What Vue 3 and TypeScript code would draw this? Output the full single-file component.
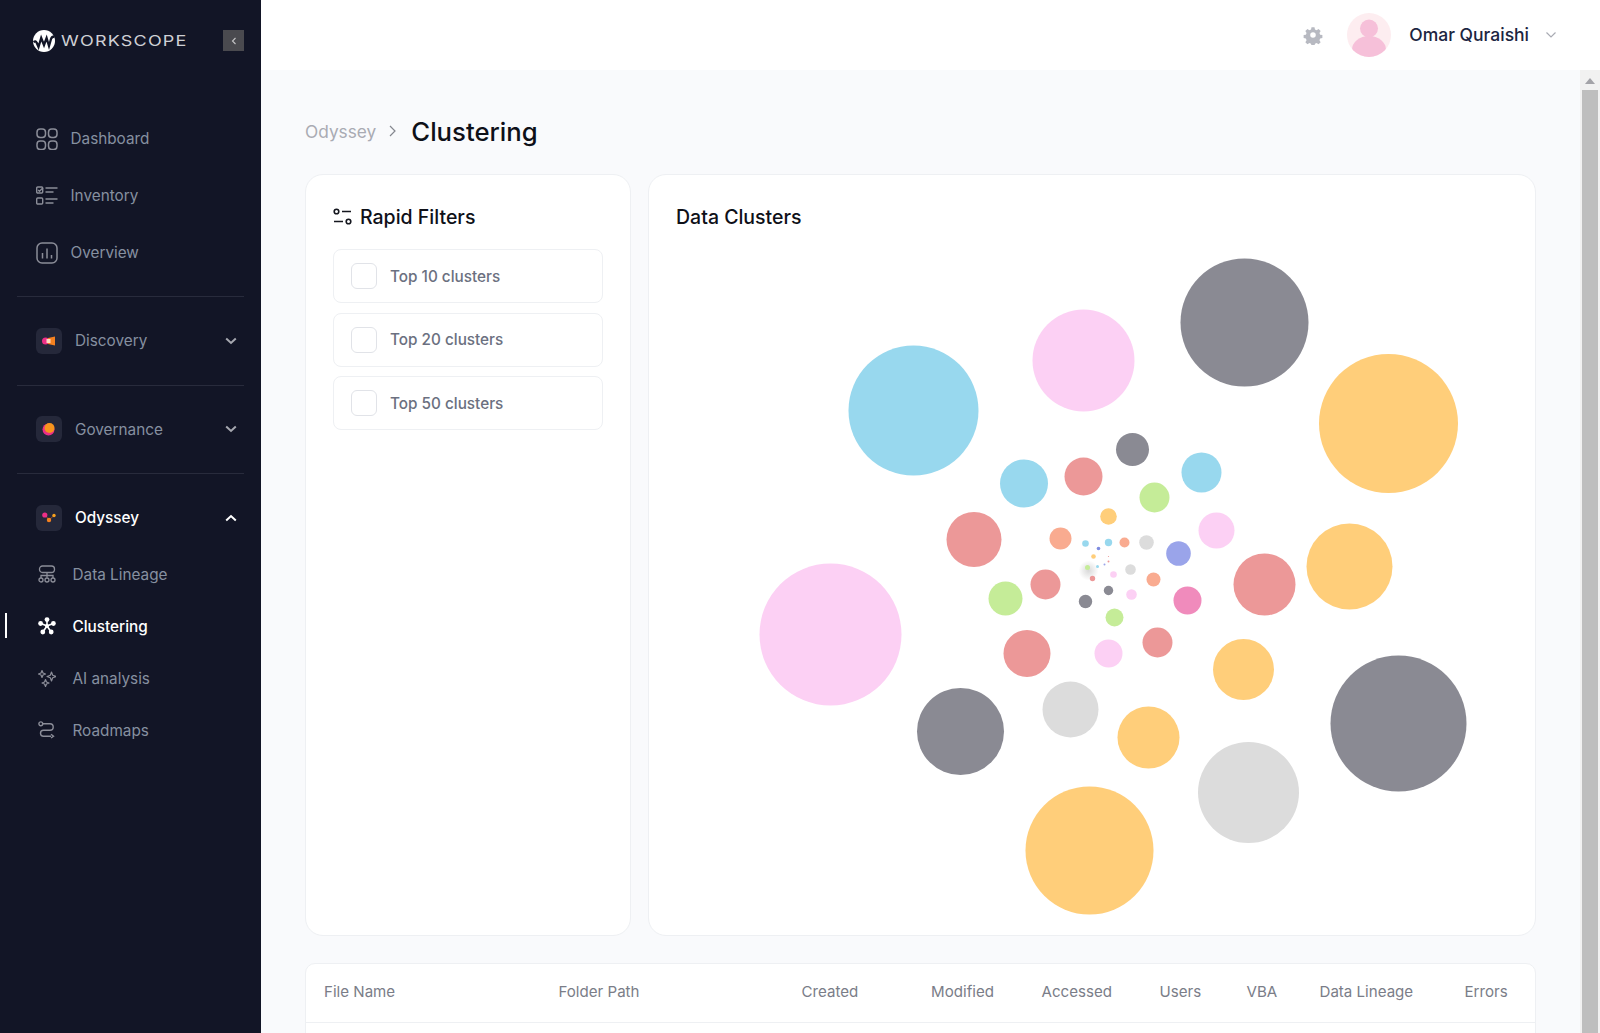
<script setup lang="ts">
type Bubble = { x: number; y: number; r: number; fill: string };

const gray = "#8a8a93";
const blue = "#98d8ee";
const pink = "#fcd0f4";
const orange = "#ffce7a";
const red = "#ec9898";
const green = "#c5ec98";
const salmon = "#f9ab90";
const peri = "#9aa4ea";
const light = "#dcdcdc";

const bubbles: Bubble[] = [
  { x: 1244, y: 322, r: 64, fill: gray },
  { x: 1083, y: 360, r: 51, fill: pink },
  { x: 913, y: 410, r: 65, fill: blue },
  { x: 1388, y: 423, r: 69.5, fill: orange },
  { x: 1132, y: 449, r: 16.5, fill: gray },
  { x: 1201, y: 472, r: 20, fill: blue },
  { x: 1083, y: 476, r: 19, fill: red },
  { x: 1023.5, y: 483, r: 24, fill: blue },
  { x: 1154, y: 497, r: 15, fill: green },
  { x: 1108, y: 516, r: 8.3, fill: orange },
  { x: 1216, y: 530, r: 18, fill: pink },
  { x: 973.5, y: 539, r: 27.5, fill: red },
  { x: 1060, y: 538, r: 11, fill: salmon },
  { x: 1349, y: 566, r: 43, fill: orange },
  { x: 1178, y: 553, r: 12.3, fill: peri },
  { x: 1264, y: 584, r: 31, fill: red },
  { x: 1045, y: 584, r: 15, fill: red },
  { x: 1005, y: 598, r: 17, fill: green },
  { x: 1187, y: 600, r: 14, fill: "#f08bbc" },
  { x: 830, y: 634, r: 71, fill: pink },
  { x: 1114, y: 617, r: 9, fill: green },
  { x: 1157, y: 642, r: 15, fill: red },
  { x: 1108, y: 653, r: 14, fill: pink },
  { x: 1026.5, y: 653, r: 23.5, fill: red },
  { x: 1243, y: 669, r: 30.5, fill: orange },
  { x: 1398, y: 723, r: 68, fill: gray },
  { x: 960, y: 731, r: 43.5, fill: gray },
  { x: 1070, y: 709, r: 28, fill: light },
  { x: 1148, y: 737, r: 31, fill: orange },
  { x: 1248, y: 792, r: 50.5, fill: light },
  { x: 1089, y: 850, r: 64, fill: orange },
  // centre of the spiral
  { x: 1085, y: 543, r: 3.3, fill: blue },
  { x: 1108, y: 542, r: 3.7, fill: blue },
  { x: 1124, y: 542, r: 5, fill: salmon },
  { x: 1146, y: 542, r: 7.3, fill: light },
  { x: 1098, y: 548, r: 1.8, fill: "#7f8ce0" },
  { x: 1093, y: 556, r: 2.3, fill: orange },
  { x: 1108, y: 556, r: 0.6, fill: red },
  { x: 1108, y: 561, r: 1, fill: red },
  { x: 1104, y: 564, r: 1, fill: peri },
  { x: 1097, y: 566, r: 1.5, fill: blue },
  { x: 1087, y: 567, r: 2.5, fill: green },
  { x: 1092, y: 578, r: 2.7, fill: red },
  { x: 1113, y: 574, r: 3.3, fill: pink },
  { x: 1130, y: 569, r: 5.3, fill: light },
  { x: 1153, y: 579, r: 7, fill: salmon },
  { x: 1131, y: 594, r: 5.3, fill: pink },
  { x: 1108, y: 590, r: 4.7, fill: gray },
  { x: 1085, y: 601, r: 6.7, fill: gray },
];

const filters = ["Top 10 clusters", "Top 20 clusters", "Top 50 clusters"];

const columns = [
  "File Name",
  "Folder Path",
  "Created",
  "Modified",
  "Accessed",
  "Users",
  "VBA",
  "Data Lineage",
  "Errors",
];
</script>

<template>
  <div class="app">
    <aside class="sidebar">
      <div class="brand">
        <svg class="brand__logo" viewBox="0 0 22 22" width="22" height="22">
          <circle cx="11" cy="11" r="11" fill="#fff" />
          <path d="M0.500 12c1.500-1 2.500-1 3.200.8L5.500 17 8.200 8l2.800 7 2.600-7 2.400 8 2-7c.5-1.800 1.500-2.500 3.500-2.500" fill="none" stroke="#121526" stroke-width="2.300" />
        </svg>
        <span class="brand__name">WORKSCOPE</span>
        <button class="collapse" aria-label="Collapse">
          <svg viewBox="0 0 10 10" width="10" height="10"><path d="M6.500 2 3.500 5l3 3" fill="none" stroke="#c4c4c6" stroke-width="1.100" /></svg>
        </button>
      </div>

      <nav class="nav">
        <a class="nav__item">
          <svg viewBox="0 0 22 22" width="22" height="22" fill="none" stroke="#8b8d98" stroke-width="1.500">
            <rect x="1" y="1" width="8.500" height="8.500" rx="3.200" />
            <rect x="12.500" y="1" width="8.500" height="8.500" rx="3.200" />
            <rect x="1" y="13" width="8.500" height="8.500" rx="3.200" />
            <rect x="12.500" y="13" width="8.500" height="8.500" rx="3.200" />
          </svg>
          Dashboard
        </a>
        <a class="nav__item">
          <svg viewBox="0 0 22 22" width="22" height="22" fill="none" stroke="#8b8d98" stroke-width="1.400">
            <rect x="0.700" y="2" width="6" height="6" rx="1" />
            <path d="m2.200 5 1.300 1.300 3.500-3.500" />
            <rect x="0.700" y="13" width="6" height="6" rx="1" />
            <path d="M9.500 3h12M9.500 7h8M9.500 14h12M9.500 18h8" />
          </svg>
          Inventory
        </a>
        <a class="nav__item">
          <svg viewBox="0 0 22 22" width="22" height="22" fill="none" stroke="#8b8d98" stroke-width="1.500">
            <rect x="1" y="1" width="20" height="20" rx="5" />
            <path d="M6.500 11v5.500M11 6.500v10M15.500 13v3.500" />
          </svg>
          Overview
        </a>
      </nav>

      <section class="group">
        <a class="group__head">
          <span class="group__icon">
            <svg viewBox="0 0 14 12" width="14" height="12">
              <circle cx="3.500" cy="6" r="3.500" fill="#ed2f86" />
              <path d="M6 3 13 1.500v9L6 9z" fill="#f5811f" />
              <rect x="4.500" y="4" width="4" height="4" fill="#ffd9c2" />
            </svg>
          </span>
          Discovery
          <svg class="caret" viewBox="0 0 12 8" width="12" height="8"><path d="m1.200 1.500 4.800 4.500 4.800-4.500" fill="none" stroke="#a6a8b0" stroke-width="2" /></svg>
        </a>
      </section>

      <section class="group">
        <a class="group__head">
          <span class="group__icon">
            <svg viewBox="0 0 14 14" width="14" height="14">
              <circle cx="6.500" cy="7.500" r="6" fill="#ed2f86" />
              <circle cx="7.500" cy="6" r="5" fill="#f7941d" />
            </svg>
          </span>
          Governance
          <svg class="caret" viewBox="0 0 12 8" width="12" height="8"><path d="m1.200 1.500 4.800 4.500 4.800-4.500" fill="none" stroke="#a6a8b0" stroke-width="2" /></svg>
        </a>
      </section>

      <section class="group group--open">
        <a class="group__head group__head--active">
          <span class="group__icon">
            <svg viewBox="0 0 14 12" width="14" height="12">
              <path d="M3 3 7 8l5-4.500" fill="none" stroke="#b05a2a" stroke-width=".8" />
              <circle cx="2.800" cy="3" r="2.600" fill="#ed2f86" />
              <circle cx="7" cy="8" r="2.200" fill="#f5811f" />
              <circle cx="12" cy="3.500" r="1.700" fill="#f7a11d" />
            </svg>
          </span>
          Odyssey
          <svg class="caret" viewBox="0 0 12 8" width="12" height="8"><path d="m1.200 6.500 4.800-4.500 4.800 4.500" fill="none" stroke="#fff" stroke-width="2" /></svg>
        </a>
        <a class="sub">
          <svg viewBox="0 0 18 18" width="18" height="18" fill="none" stroke="#8b8d98" stroke-width="1.300">
            <rect x="1.500" y="1" width="15" height="6.500" rx="3" />
            <path d="M9 7.500v5M3 13V10.500h12V13" />
            <circle cx="3" cy="15" r="2" />
            <circle cx="9" cy="15" r="2" />
            <circle cx="15" cy="15" r="2" />
          </svg>
          Data Lineage
        </a>
        <a class="sub sub--active">
          <svg viewBox="0 0 18 18" width="18" height="18" fill="#fff" stroke="#fff">
            <path d="M9 9 9 3M9 9 3 6.500M9 9 15 6.500M9 9 4.800 15M9 9 13.200 15" stroke-width="1.600" />
            <circle cx="9" cy="2.600" r="2.400" stroke="none" />
            <circle cx="2.600" cy="6.500" r="2.400" stroke="none" />
            <circle cx="15.400" cy="6.500" r="2.400" stroke="none" />
            <circle cx="4.800" cy="15" r="2.400" stroke="none" />
            <circle cx="13.200" cy="15" r="2.400" stroke="none" />
            <circle cx="9" cy="9" r="2" stroke="none" />
          </svg>
          Clustering
        </a>
        <a class="sub">
          <svg viewBox="0 0 18 18" width="18" height="18" fill="none" stroke="#8b8d98" stroke-width="1.200" stroke-linejoin="round">
            <path d="M4 1.500 5 4l2.500 1L5 6 4 8.500 3 6 .5 5 3 4z" />
            <path d="M13.500 3 14.700 6.300 18 7.500l-3.300 1.200-1.200 3.300-1.200-3.300L9 7.500l3.300-1.200z" />
            <path d="M7.500 10.500 8.500 13l2.500 1-2.500 1-1 2.500-1-2.500L4 14l2.500-1z" />
          </svg>
          AI analysis
        </a>
        <a class="sub">
          <svg viewBox="0 0 18 18" width="18" height="18" fill="none" stroke="#8b8d98" stroke-width="1.400">
            <circle cx="2.800" cy="2.800" r="1.900" />
            <path d="M4.700 2.800H12a3.200 3.200 0 0 1 0 6.400H5.500a3 3 0 0 0 0 6H13" />
            <path d="M13 13.300 15.500 15.200 13 17" />
          </svg>
          Roadmaps
        </a>
      </section>
    </aside>

    <div class="page">
      <header class="topbar">
        <svg class="gear" viewBox="0 0 24 24" width="20" height="20" fill="#b7b9c1">
          <path fill-rule="evenodd" d="M10 1.500h4l.6 3 2.200 1 2.600-1.600 2.800 2.800-1.600 2.600.9 2.200 3 .6v4l-3 .6-.9 2.200 1.600 2.600-2.800 2.800-2.600-1.600-2.200.9-.6 3h-4l-.6-3-2.200-.9-2.600 1.600-2.800-2.800 1.600-2.600-.9-2.200-3-.6v-4l3-.6.9-2.200L1.800 6.700l2.800-2.800 2.600 1.600 2.200-1zM12 8.300a3.700 3.700 0 1 0 0 7.400 3.700 3.700 0 0 0 0-7.400z" transform="translate(1.200 1.200) scale(.9)" />
        </svg>
        <svg class="avatar" viewBox="0 0 44 44" width="44" height="44">
          <defs><clipPath id="avatar-clip"><circle cx="22" cy="22" r="22" /></clipPath></defs>
          <circle cx="22" cy="22" r="22" fill="#fdedf0" />
          <g clip-path="url(#avatar-clip)" fill="#f6c0d9">
            <circle cx="22" cy="15.500" r="9" />
            <ellipse cx="22" cy="37" rx="17" ry="14" />
          </g>
        </svg>
        <span class="user">Omar Quraishi</span>
        <svg class="user__caret" viewBox="0 0 12 8" width="12" height="8"><path d="m1.500 1.500 4.500 4.500 4.500-4.500" fill="none" stroke="#a9abb3" stroke-width="1.200" /></svg>
      </header>

      <div class="body">
        <main class="main">
          <div class="crumbs">
            <span class="crumbs__parent">Odyssey</span>
            <svg viewBox="0 0 10 14" width="10" height="14"><path d="m2 2 5 5-5 5" fill="none" stroke="#85878f" stroke-width="1.200" /></svg>
            <h1>Clustering</h1>
          </div>

          <div class="panels">
            <section class="card filters">
              <h2 class="card__title">
                <svg viewBox="0 0 20 18" width="20" height="18" fill="none" stroke="#15171f" stroke-width="1.600">
                  <circle cx="3.500" cy="3.500" r="2.300" />
                  <path d="M9 3.500h9M1 13.500h9" />
                  <circle cx="15.500" cy="13.500" r="2.300" />
                </svg>
                Rapid Filters
              </h2>
              <label v-for="f in filters" :key="f" class="filter">
                <span class="filter__box"></span>
                {{ f }}
              </label>
            </section>

            <section class="card chart">
              <h2 class="card__title">Data Clusters</h2>
              <svg class="chart__svg" viewBox="675.500 248.500 833 668" width="833" height="668">
                <defs>
                  <radialGradient id="core-glow">
                    <stop offset="0" stop-color="#c9c9c9" stop-opacity=".7" />
                    <stop offset="1" stop-color="#c9c9c9" stop-opacity="0" />
                  </radialGradient>
                </defs>
                <circle cx="1088" cy="570" r="10" fill="url(#core-glow)" />
                <circle v-for="(b, i) in bubbles" :key="i" :cx="b.x" :cy="b.y" :r="b.r" :fill="b.fill" />
              </svg>
            </section>
          </div>

          <section class="table">
            <div class="table__head">
              <span v-for="c in columns" :key="c">{{ c }}</span>
            </div>
            <div class="table__row"></div>
          </section>
        </main>

        <div class="scrollbar" aria-hidden="true">
          <span class="scrollbar__arrow"></span>
          <span class="scrollbar__thumb"></span>
        </div>
      </div>
    </div>
  </div>
</template>

<style scoped>
.app {
  display: grid;
  grid-template-columns: 261px 1fr;
  height: 1033px;
  overflow: hidden;
  font-family: Inter, "Liberation Sans", sans-serif;
}

.sidebar {
  background: #121526;
  padding: 0 17px;
  color: #8690a0;
  font-size: 15.300px;
}

.brand {
  display: flex;
  align-items: center;
  height: 81px;
  padding-left: 16px;
  margin-bottom: 29px;
}

.brand__logo {
  flex: none;
}

.brand__name {
  margin-left: 6px;
  color: #cfd0d5;
  font-size: 15px;
  letter-spacing: 1px;
  transform: scaleX(1.2);
  transform-origin: left center;
}

.collapse {
  display: flex;
  align-items: center;
  justify-content: center;
  flex: none;
  width: 21px;
  height: 21px;
  margin-left: auto;
  padding: 0;
  background: #4a4a4f;
  border: none;
}

.nav {
  padding-bottom: 15px;
  border-bottom: 1px solid #282b3c;
}

.nav__item {
  display: flex;
  align-items: center;
  gap: 12.500px;
  height: 57px;
  padding-left: 19px;
}

.group {
  padding: 15px 0 15.500px;
  border-bottom: 1px solid #282b3c;
}

.group--open {
  border-bottom: none;
}

.group__head {
  display: flex;
  align-items: center;
  gap: 13px;
  height: 57px;
  padding: 0 7px 0 19px;
}

.group__head--active {
  color: #fff;
  font-weight: 500;
}

.group__icon {
  display: flex;
  align-items: center;
  justify-content: center;
  width: 26px;
  height: 26px;
  background: #25283a;
  border-radius: 6px;
}

.caret {
  margin-left: auto;
}

.sub {
  position: relative;
  display: flex;
  align-items: center;
  gap: 16.500px;
  height: 52px;
  padding-left: 21px;
}

.group__head + .sub {
  margin-top: 2px;
}

.sub--active {
  color: #fff;
  font-weight: 500;
}

.sub--active::before {
  content: "";
  position: absolute;
  left: -12px;
  top: 13px;
  width: 2px;
  height: 25px;
  background: #fff;
}

.page {
  display: flex;
  flex-direction: column;
  min-width: 0;
}

.topbar {
  display: flex;
  flex: none;
  align-items: center;
  height: 70px;
  padding-right: 43px;
  justify-content: flex-end;
  background: #fff;
}

.gear {
  margin-right: 24px;
}

.user {
  margin: 0 16px 1px 18px;
  color: #1c2541;
  font-size: 17.500px;
  font-weight: 500;
}

.body {
  display: flex;
  flex: 1;
  min-height: 0;
}

.main {
  flex: 1;
  min-width: 0;
  padding: 0 44px;
  overflow: hidden;
  background: #f9fafc;
}

.crumbs {
  display: flex;
  align-items: center;
  box-sizing: border-box;
  height: 104px;
  padding-top: 18px;
}

.crumbs__parent {
  color: #a9abb3;
  font-size: 17.300px;
}

.crumbs svg {
  margin: 0 13px 0 12px;
}

.crumbs h1 {
  margin: 0;
  color: #0e1018;
  font-size: 25.700px;
  font-weight: 500;
}

.panels {
  display: flex;
  gap: 17px;
}

.card {
  height: 762px;
  box-sizing: border-box;
  background: #fff;
  border: 1px solid #eef0f3;
  border-radius: 18px;
}

.card__title {
  display: flex;
  align-items: center;
  gap: 7px;
  height: 30px;
  margin: 0 0 17px;
  color: #0e1018;
  font-size: 19.500px;
  font-weight: 500;
}

.filters {
  flex: none;
  width: 326px;
  padding: 27px 27px;
}

.filter {
  display: flex;
  align-items: center;
  gap: 13px;
  height: 54px;
  box-sizing: border-box;
  margin-bottom: 9.500px;
  padding-left: 17px;
  color: #6b7080;
  font-size: 15.300px;
  font-weight: 500;
  border: 1px solid #eef0f3;
  border-radius: 8px;
}

.filter__box {
  width: 26px;
  height: 26px;
  box-sizing: border-box;
  border: 1.500px solid #e1e3e8;
  border-radius: 6px;
}

.chart {
  flex: 1;
  min-width: 0;
  padding: 27px 27px 0;
  overflow: hidden;
}

.chart__svg {
  display: block;
}

.table {
  margin-top: 27px;
  background: #fff;
  border: 1px solid #eef0f3;
  border-radius: 10px 10px 0 0;
}

.table__head {
  display: grid;
  grid-template-columns: 234.500px 243px 129.600px 110.400px 118px 87px 73px 145px 1fr;
  align-items: center;
  box-sizing: border-box;
  height: 59px;
  padding: 0 0 4px 18px;
  color: #7a7d88;
  font-size: 15.100px;
  border-bottom: 1px solid #eef0f3;
}

.table__row {
  height: 60px;
}

.scrollbar {
  display: flex;
  flex: none;
  flex-direction: column;
  align-items: center;
  width: 20px;
  background: #f1f1f1;
}

.scrollbar__arrow {
  width: 0;
  height: 0;
  margin: 8px 0 6px;
  border: 5px solid transparent;
  border-top: none;
  border-bottom: 6px solid #a3a3a8;
}

.scrollbar__thumb {
  flex: 1;
  width: 16px;
  background: #bebebe;
}
</style>

<style>
html,
body {
  overflow: hidden;
}
</style>
